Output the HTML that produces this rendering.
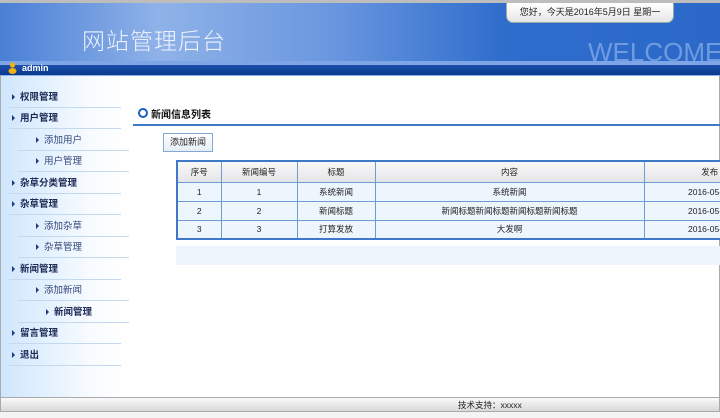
<!DOCTYPE html>
<html><head><meta charset="utf-8"><style>
*{margin:0;padding:0;box-sizing:border-box}
body{width:720px;height:418px;overflow:hidden;background:#f4f4f4;font-family:"Liberation Sans","Noto Sans CJK SC",sans-serif;font-size:9px;color:#222;position:relative}
.abs{position:absolute}
#top{left:0;top:0;width:720px;height:3px;background:#bdbdbd}
#head{left:0;top:3px;width:720px;height:58px;background:linear-gradient(90deg,#4a7fd6 0%,#8fb2e8 22%,#6c98e0 45%,#2f6dcc 70%,#2b68c8 100%)}
#title{left:82px;top:22px;font-size:23px;color:#eef3fb;letter-spacing:1px;font-family:"Noto Sans CJK SC",sans-serif;font-weight:300}
#welcome{left:588px;top:37px;font-size:26px;color:#6f9be0;letter-spacing:0px;height:24px;overflow:hidden;line-height:30px}
#date{left:506px;top:3px;width:168px;height:20px;background:linear-gradient(#fff,#e6e6e6);border:1px solid #9aa;border-top:none;border-radius:0 0 7px 7px;text-align:center;line-height:19px;font-size:9px;color:#222}
#bar1{left:0;top:61px;width:720px;height:4px;background:#7ea6e6}
#bar2{left:0;top:65px;width:720px;height:10px;background:linear-gradient(#1d4faa,#0a3a8e)}
#bar3{left:0;top:75px;width:720px;height:1px;background:#8fb4ea}
#admin{left:22px;top:63px;color:#fff;font-size:9px;font-weight:bold}
#user{left:8px;top:62px;width:9px;height:12px}
#main{left:0;top:76px;width:720px;height:321px;background:#fff;border-left:1px solid #aaa;border-right:1px solid #aaa}
#side{left:1px;top:76px;width:128px;height:321px;background:linear-gradient(90deg,#cfe6fd 0%,#e6f2fe 40%,#f8fbff 70%,#fff 100%)}
.it{position:absolute;left:8px;height:20px;line-height:20px;font-size:9.5px;font-weight:bold;color:#1d2a55;width:112px;border-bottom:1px solid #c4d8ee}
.sub{left:17px;width:111px;font-weight:normal;color:#35467a;padding-left:8px}
.it:before{content:"";display:inline-block;border-left:3px solid #1d3a7a;border-top:3px solid transparent;border-bottom:3px solid transparent;margin:0 5px 0 3px;vertical-align:0}
.sub:before{margin-left:10px}
#foot{left:0;top:397px;width:720px;height:15px;background:linear-gradient(#fafafa,#d8d8d8);border:1px solid #aaa;line-height:14px;font-size:8.5px;color:#222;padding-left:457px}
#circ{left:138px;top:108px;width:10px;height:10px;border:2.5px solid #1d5fbf;border-radius:50%}
#ltitle{left:151px;top:106px;font-size:10px;font-weight:bold;color:#111}
#hr{left:133px;top:124px;width:587px;height:2px;background:#3f78c8}
#btn{left:163px;top:133px;width:50px;height:19px;border:1px solid #86a7d4;background:linear-gradient(#fff,#e6edf6);font-size:9px;line-height:16px;text-align:center;color:#222}
table{position:absolute;left:176px;top:160px;width:600px;border-collapse:collapse;border-top:2px solid #3f78c8;border-bottom:2px solid #3f78c8;border-left:2px solid #3f78c8}
td,th{border:1px solid #6f9bd3;text-align:center;font-size:8.5px;font-weight:normal;height:19px;background:#edf5fd}
th{background:linear-gradient(#f8f8f8,#e6e6ea);height:21px}
#strip{left:176px;top:246px;width:544px;height:19px;background:#eef5fd}
</style></head><body>
<div id="top" class="abs"></div>
<div id="head" class="abs"></div>
<div id="title" class="abs">网站管理后台</div>
<div id="welcome" class="abs">WELCOME</div>
<div id="date" class="abs">您好，今天是2016年5月9日 星期一</div>
<div id="bar1" class="abs"></div><div id="bar2" class="abs"></div><div id="bar3" class="abs"></div>
<svg id="user" class="abs" viewBox="0 0 9 12"><circle cx="4.5" cy="3" r="2.6" fill="#f2b10c"/><ellipse cx="4.5" cy="9" rx="4" ry="3" fill="#f2b10c"/></svg>
<div id="admin" class="abs">admin</div>
<div id="main" class="abs"></div>
<div id="side" class="abs">
<div class="it" style="top:12px">权限管理</div>
<div class="it" style="top:33px">用户管理</div>
<div class="it sub" style="top:55px">添加用户</div>
<div class="it sub" style="top:76px">用户管理</div>
<div class="it" style="top:98px">杂草分类管理</div>
<div class="it" style="top:119px">杂草管理</div>
<div class="it sub" style="top:141px">添加杂草</div>
<div class="it sub" style="top:162px">杂草管理</div>
<div class="it" style="top:184px">新闻管理</div>
<div class="it sub" style="top:205px">添加新闻</div>
<div class="it sub" style="top:227px;padding-left:18px;font-weight:bold;color:#1d2a55">新闻管理</div>
<div class="it" style="top:248px">留言管理</div>
<div class="it" style="top:270px">退出</div>
</div>
<div id="circ" class="abs"></div>
<div id="ltitle" class="abs">新闻信息列表</div>
<div id="hr" class="abs"></div>
<div id="btn" class="abs">添加新闻</div>
<table>
<tr><th style="width:44px">序号</th><th style="width:76px">新闻编号</th><th style="width:78px">标题</th><th style="width:269px">内容</th><th>发布</th></tr>
<tr><td>1</td><td>1</td><td>系统新闻</td><td>系统新闻</td><td>2016-05-09</td></tr>
<tr><td>2</td><td>2</td><td>新闻标题</td><td>新闻标题新闻标题新闻标题新闻标题</td><td>2016-05-09</td></tr>
<tr><td>3</td><td>3</td><td>打算发放</td><td>大发啊</td><td>2016-05-09</td></tr>
</table>
<div id="strip" class="abs"></div>
<div id="foot" class="abs">技术支持：xxxxx</div>
</body></html>
